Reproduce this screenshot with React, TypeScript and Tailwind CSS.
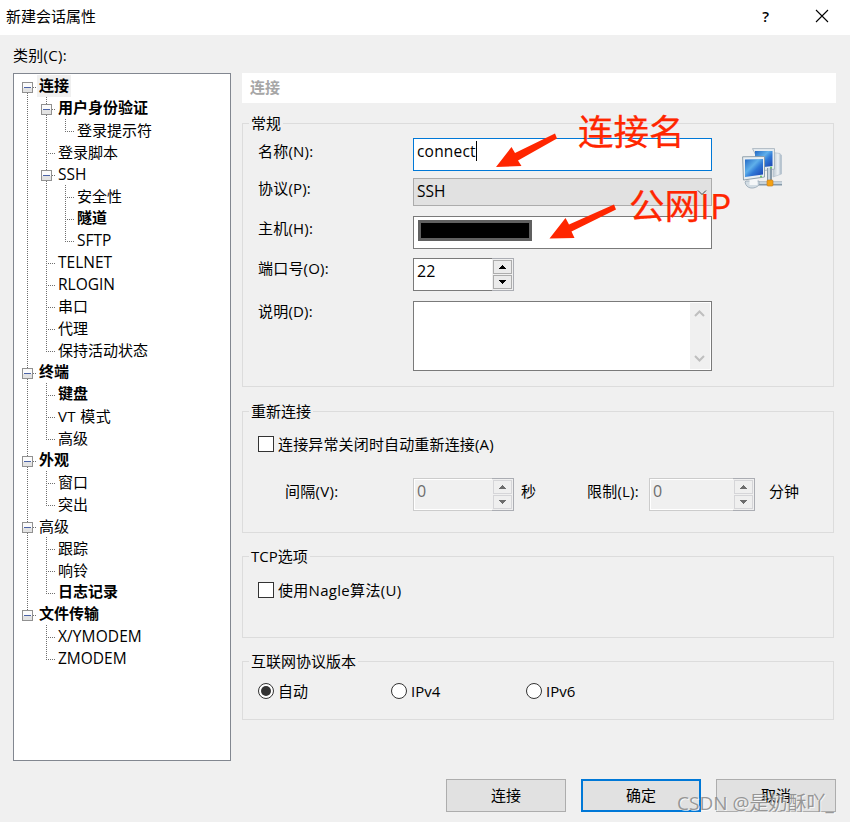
import type { ReactNode } from "react";

type Node = {
    label: string;
    depth: number;
    bold?: boolean;
    size?: string;
};

const nodes: Node[] = [
    { label: "连接", depth: 0, bold: true },
    { label: "用户身份验证", depth: 1, bold: true },
    { label: "登录提示符", depth: 2 },
    { label: "登录脚本", depth: 1 },
    { label: "SSH", depth: 1, size: "text-[15.5px]" },
    { label: "安全性", depth: 2 },
    { label: "隧道", depth: 2, bold: true },
    { label: "SFTP", depth: 2, size: "text-[15.5px]" },
    { label: "TELNET", depth: 1, size: "text-[15.5px]" },
    { label: "RLOGIN", depth: 1, size: "text-[15.5px]" },
    { label: "串口", depth: 1 },
    { label: "代理", depth: 1 },
    { label: "保持活动状态", depth: 1 },
    { label: "终端", depth: 0, bold: true },
    { label: "键盘", depth: 1, bold: true },
    { label: "VT 模式", depth: 1, size: "tracking-[0.4px]" },
    { label: "高级", depth: 1 },
    { label: "外观", depth: 0, bold: true },
    { label: "窗口", depth: 1 },
    { label: "突出", depth: 1 },
    { label: "高级", depth: 0 },
    { label: "跟踪", depth: 1 },
    { label: "响铃", depth: 1 },
    { label: "日志记录", depth: 1, bold: true },
    { label: "文件传输", depth: 0, bold: true },
    { label: "X/YMODEM", depth: 1, size: "text-[15.5px] tracking-[0.1px]" },
    { label: "ZMODEM", depth: 1, size: "text-[15.5px]" }
];

// true when a sibling at this depth follows further down the tree
function continues(index: number, depth: number) {
    for (let i = index + 1; i < nodes.length; i++) {
        if (nodes[i].depth < depth) return false;
        if (nodes[i].depth === depth) return true;
    }
    return false;
}

function TreeCell({ own, up, down, box }: { own: boolean; up: boolean; down: boolean; box: boolean }) {
    return (
        <svg width="19" height="22" className="shrink-0" shapeRendering="crispEdges">
            <g stroke="#6f6f6f" strokeDasharray="1 1">
                {up && <path d="M9.5 0V12" />}
                {down && <path d="M9.5 12V22" />}
                {own && <path d="M9 12.5H18" />}
            </g>
            {box && (
                <>
                    <rect x="4" y="7" width="11" height="11" fill="#919191" />
                    <rect x="5" y="8" width="9" height="5" fill="#fbfbfb" />
                    <rect x="5" y="13" width="9" height="4" fill="#e3e3e3" />
                    <rect x="6" y="12" width="7" height="1" fill="#4b63a7" />
                </>
            )}
        </svg>
    );
}

function Tree() {
    return (
        <div className="w-[218px] h-[688px] border border-[#828790] bg-white pt-px pl-1">
            {nodes.map((node, i) => {
                const parent = nodes[i + 1] !== undefined && nodes[i + 1].depth > node.depth;
                return (
                    <div key={i} className="flex h-[22px]">
                        {Array.from({ length: node.depth + 1 }, (_, d) => {
                            const own = d === node.depth;
                            const down = continues(i, d);
                            return <TreeCell key={d} own={own} up={own ? i > 0 : down} down={down} box={own && parent} />;
                        })}
                        <span className={`px-0.5 whitespace-pre ${node.bold ? "font-bold leading-[21px]" : "leading-[22px]"} ${node.size ?? ""} ${i === 0 ? "bg-[#f0f0f0]" : ""}`}>
                            {node.label}
                        </span>
                    </div>
                );
            })}
        </div>
    );
}

function Group({ title, className, children }: { title: string; className: string; children: ReactNode }) {
    return (
        <section className={`w-[592px] border border-[#dcdcdc] ${className}`}>
            <h2 className="-mt-3 mb-px ml-1.5 w-fit bg-[#f0f0f0] px-0.5 leading-[22px]">{title}</h2>
            {children}
        </section>
    );
}

function Spinner({ value, className, disabled }: { value: string; className: string; disabled?: boolean }) {
    const arrow = disabled ? "#6d6d6d" : "#000";
    const button = `flex h-3.5 w-[19px] items-center justify-center border ${
        disabled ? "border-[#d5d5d8] bg-[#efefef]" : "border-[#acacac] bg-[#ebebeb]"
    }`;
    return (
        <div className={`flex h-[33px] ${className}`}>
            <div className={`flex-1 border border-r-0 pl-[3px] text-base leading-[25px] ${
                disabled
                    ? "border-[#cccccc] text-[#6d6d6d] shadow-[inset_1px_1px_0_#fff,inset_0_-1px_0_#fff]"
                    : "border-[#7a7a7a] bg-white"
            }`}>
                {value}
            </div>
            <div className="flex w-[22px] flex-col gap-px border border-l-0 border-[#abadb3] pt-px pl-px">
                <div className={button}>
                    <svg width="7" height="4" shapeRendering="crispEdges"><path d="M3 0h1v1h1v1h1v1h1v1H0V3h1V2h1V1h1z" fill={arrow} /></svg>
                </div>
                <div className={button}>
                    <svg width="7" height="4" shapeRendering="crispEdges"><path d="M0 0h7v1H6v1H5v1H4v1H3V3H2V2H1V1H0z" fill={arrow} /></svg>
                </div>
            </div>
        </div>
    );
}

function Checkbox({ label, className }: { label: string; className: string }) {
    return (
        <label className={`flex h-4 items-center gap-1 pl-[15px] whitespace-nowrap ${className}`}>
            <span className="size-4 border border-[#333] bg-white" />
            {label}
        </label>
    );
}

function Radio({ label, checked, className }: { label: string; checked?: boolean; className: string }) {
    return (
        <label className={`flex h-4 items-center gap-1 ${className}`}>
            <span className="flex size-4 items-center justify-center rounded-full border border-[#333] bg-white">
                {checked && <span className="size-2.5 rounded-full bg-[#333]" />}
            </span>
            {label}
        </label>
    );
}

function ComputersIcon() {
    return (
        <svg width="41" height="41" viewBox="0 0 41 41" className="mt-2.5 ml-[30px]">
            <defs>
                <linearGradient id="screen" x1="0" y1="0" x2="1" y2="1">
                    <stop offset="0" stopColor="#2468c4" />
                    <stop offset=".4" stopColor="#5fb0ea" />
                    <stop offset=".6" stopColor="#2f78d6" />
                    <stop offset="1" stopColor="#1c3fae" />
                </linearGradient>
                <linearGradient id="tower" x1="0" y1="0" x2="1" y2="0">
                    <stop offset="0" stopColor="#b9c5cf" />
                    <stop offset=".6" stopColor="#eef2f5" />
                    <stop offset="1" stopColor="#9fb0bf" />
                </linearGradient>
            </defs>
            <path d="M31 4.500l7 1 1.500 2v18.500l-8.500 3z" fill="url(#tower)" stroke="#b4c2ce" strokeWidth=".7" />
            <path d="M10.500 .6h22v20.500l-11 1.500z" fill="#e6ecf0" stroke="#9eacb8" strokeWidth=".8" />
            <path d="M13 3h17.500v15L13 20z" fill="url(#screen)" />
            <path d="M17 35.500h23" stroke="#8699a8" strokeWidth="4" />
            <path d="M27.500 20v13" stroke="#8699a8" strokeWidth="5" />
            <path d="M17 35h23M27 20v13" stroke="#c8d4dd" strokeWidth="2" />
            <path d="M3 34c1 7.500 10 7.500 14 3v-4H4z" fill="#d3dde4" stroke="#94a5b3" strokeWidth=".8" />
            <path d="M7.500 31h8v6h-8z" fill="#f5f7f8" />
            <path d="M.6 8.800L22.500 8.500v20.500L1.500 32z" fill="#e9eff3" stroke="#8797a4" strokeWidth=".9" />
            <path d="M3 11.500l18-.5v15.500L3 29z" fill="url(#screen)" />
            <circle cx="19" cy="28.500" r="1" fill="#64c860" />
            <circle cx="29" cy="19.500" r="1" fill="#64c860" />
            <rect x="25" y="32" width="6" height="6" rx="1" fill="#f5a111" stroke="#c58022" strokeWidth=".7" />
        </svg>
    );
}

function General() {
    const label = "w-[155px] tracking-[0.2px]";
    return (
        <Group title="常规" className="mt-5 h-[264px]">
            <div className="flex pt-[3px] pl-[15px]">
                <div className="w-[454px]">
                    <div className="flex">
                        <span className={`${label} leading-[26px]`}>名称(N):</span>
                        <div className="flex h-[33px] w-[299px] border border-[#0078d7] bg-white pl-[3px]">
                            <span className="text-[15.500px] leading-[25px] tracking-[0.2px]">connect</span>
                            <span className="mt-0.5 h-5 w-px bg-black" />
                        </div>
                    </div>
                    <div className="mt-[7px] flex">
                        <span className={`${label} leading-[20px]`}>协议(P):</span>
                        <div className="flex h-7 w-[299px] items-center justify-between border border-[#acacac] bg-[#e1e1e1] pr-1 pl-[3px] text-[15.500px]">
                            SSH
                            <svg width="10" height="6" fill="none" stroke="#444" className="mt-0.5"><path d="M1 .5l4 4 4-4" /></svg>
                        </div>
                    </div>
                    <div className="mt-2.5 flex">
                        <span className={`${label} leading-[24px]`}>主机(H):</span>
                        <div className="h-[33px] w-[299px] border border-[#7a7a7a] bg-white pt-[3px] pl-1">
                            <div className="h-[21px] w-[114px] border-[3px] border-[#606060] bg-black" />
                        </div>
                    </div>
                    <div className="mt-[9px] flex">
                        <span className={`${label} leading-[20px]`}>端口号(O):</span>
                        <Spinner value="22" className="w-[101px]" />
                    </div>
                    <div className="mt-2.5 flex">
                        <span className={`${label} leading-[20px]`}>说明(D):</span>
                        <div className="flex h-[70px] w-[299px] justify-end border border-[#7a7a7a] bg-white p-px">
                            <div className="flex w-5 flex-col items-center justify-between bg-[#f0f0f0] py-[7px] pr-px">
                                <svg width="11" height="7" fill="none" stroke="#bfbfbf" strokeWidth="2"><path d="M1 6l4.500-4.500L10 6" /></svg>
                                <svg width="11" height="7" fill="none" stroke="#bfbfbf" strokeWidth="2"><path d="M1 1l4.500 4.500L10 1" /></svg>
                            </div>
                        </div>
                    </div>
                </div>
                <ComputersIcon />
            </div>
        </Group>
    );
}

// Red hand-placed notes lying over the form
function Annotations() {
    return (
        <div className="pointer-events-none absolute inset-0 text-[35.500px] leading-[40px] text-[#ff2600] [-webkit-text-stroke:0.25px_#ff2600]">
            <svg width="850" height="260" className="absolute top-0 left-0" fill="#ff2600">
                <path d="M496 167l15.500-20 3.500 6 40-19.500 2 5L518 160.500l3.500 5.500z" />
                <path d="M549.500 238.500l16-20.500 3.500 6.500 45-20 2 5-44.500 22 3 6.500z" />
            </svg>
            <span className="absolute top-[111px] left-[578px]">连接名</span>
            <span className="absolute top-[185px] left-[629px]">公网IP</span>
        </div>
    );
}

export default function App() {
    return (
        <div className="relative h-[822px] w-[850px] overflow-hidden bg-[#f0f0f0] font-['Open_Sans','Noto_Sans_CJK_SC',sans-serif] text-[15px] text-black">
            {/* Title bar */}
            <header className="flex h-[35px] items-center bg-white pb-[3px] pl-1.5">
                <h1 className="flex-1 leading-8">新建会话属性</h1>
                <span className="mr-[46px] leading-8 font-semibold">?</span>
                <svg width="14" height="14" className="mr-[21px]" fill="none" stroke="#000" strokeWidth="1.100">
                    <path d="M1 1l12 12M13 1L1 13" />
                </svg>
            </header>

            <div className="flex gap-[11px] pl-[13px]">
                <aside>
                    <p className="h-[38px] leading-[41px] tracking-[0.3px]">类别(C):</p>
                    <Tree />
                </aside>

                <main className="pt-[38px]">
                    <div className="h-[30px] w-[594px] bg-white pl-2 leading-[29px] font-bold text-[#a6a6a6]">连接</div>
                    <General />

                    <Group title="重新连接" className="mt-6 h-[122px]">
                        <Checkbox label="连接异常关闭时自动重新连接(A)" className="mt-3.5 tracking-[0.15px]" />
                        <div className="mt-[26px] flex pl-[42px] leading-[27px]">
                            <span className="w-32 tracking-[0.3px]">间隔(V):</span>
                            <Spinner value="0" className="w-[101px]" disabled />
                            <span className="w-[66px] pl-[7px]">秒</span>
                            <span className="ml-[7px] w-[62px] tracking-[0.2px]">限制(L):</span>
                            <Spinner value="0" className="w-[106px]" disabled />
                            <span className="pl-3.5">分钟</span>
                        </div>
                    </Group>

                    <Group title="TCP选项" className="mt-[23px] h-[82px]">
                        <Checkbox label="使用Nagle算法(U)" className="mt-[15px] tracking-[0.3px]" />
                    </Group>

                    <Group title="互联网协议版本" className="mt-[23px] h-[59px]">
                        <div className="mt-[11px] flex pl-[15px]">
                            <Radio label="自动" checked className="w-[133px]" />
                            <Radio label="IPv4" className="w-[135px]" />
                            <Radio label="IPv6" className="w-[135px]" />
                        </div>
                    </Group>
                </main>
            </div>

            <footer className="mt-[18px] flex justify-end gap-[15px] pr-3.5">
                <button className="h-[33px] w-[120px] border border-[#adadad] bg-[#e1e1e1]">连接</button>
                <button className="h-[33px] w-[120px] border-2 border-[#0078d7] bg-[#e1e1e1]">确定</button>
                <button className="h-[33px] w-[120px] border border-[#adadad] bg-[#e1e1e1]">取消</button>
            </footer>

            <Annotations />
            <div className="absolute top-[790px] left-[677px] text-[19px] leading-[26px] whitespace-nowrap text-[#808080]/80 [text-shadow:1px_1px_0_#ffffffb0]">
                CSDN @是奶酥吖_
            </div>
        </div>
    );
}
